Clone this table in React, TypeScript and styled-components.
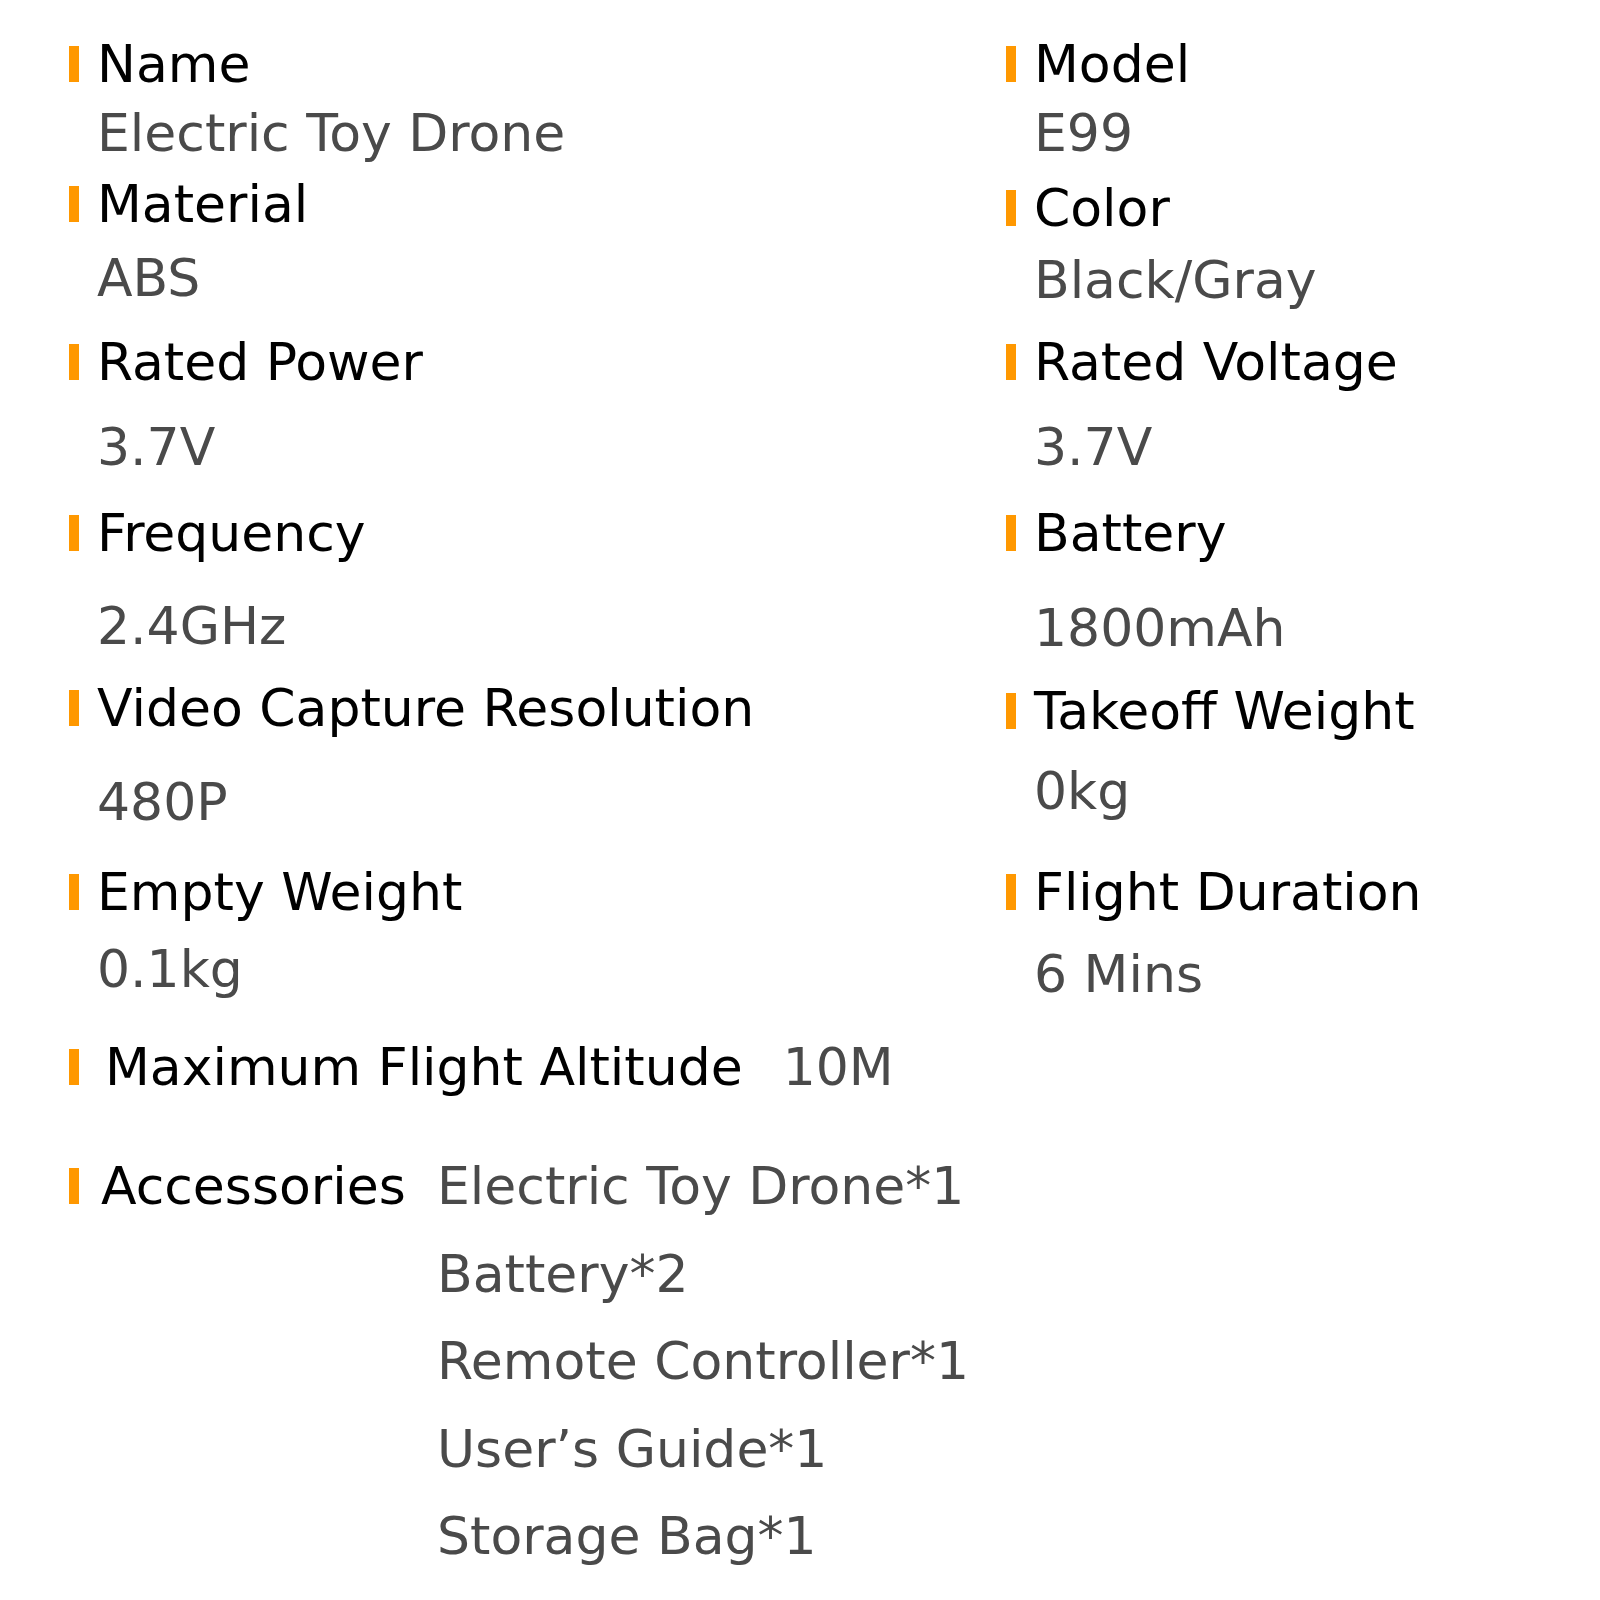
import React from "react";
import styled, { createGlobalStyle } from "styled-components";

const GlobalStyle = createGlobalStyle`
  body {
    margin: 0;
    background: #ffffff;
    font-family: "DejaVu Sans", "Liberation Sans", sans-serif;
  }
`;

const Page = styled.div`
  width: 1600px;
  height: 1600px;
  box-sizing: border-box;
  padding: 34px 0 0 69px;
  font-size: 52px;
`;

const Row = styled.div<{ $gap: number }>`
  display: grid;
  grid-template-columns: 937px 1fr;
  margin-top: ${({ $gap }) => $gap}px;
`;

const SpecCell = styled.div<{ $top?: number }>`
  display: flex;
  flex-direction: column;
  margin-top: ${({ $top }) => $top || 0}px;
`;

const LabelLine = styled.div`
  display: flex;
  align-items: flex-start;
  height: 60px;
  line-height: 60px;
  color: #000000;
  white-space: nowrap;
`;

const Marker = styled.span<{ $space?: number }>`
  flex-shrink: 0;
  width: 10px;
  height: 36px;
  margin-top: 12px;
  margin-right: ${({ $space }) => $space || 18}px;
  background: #ff9800;
`;

const Value = styled.div<{ $gap?: number }>`
  height: 60px;
  line-height: 60px;
  margin-top: ${({ $gap }) => $gap || 0}px;
  margin-left: 28px;
  color: #4a4a4a;
  white-space: nowrap;
`;

const InlineRow = styled.div<{ $gap: number }>`
  display: flex;
  align-items: flex-start;
  gap: 40px;
  margin-top: ${({ $gap }) => $gap}px;
`;

const InlineValue = styled.span`
  line-height: 60px;
  color: #4a4a4a;
`;

const AccessoryRow = styled.div<{ $gap: number }>`
  display: grid;
  grid-template-columns: 368px 1fr;
  margin-top: ${({ $gap }) => $gap}px;
`;

const AccessoryList = styled.div`
  display: flex;
  flex-direction: column;
  gap: 27.5px;
`;

const AccessoryItem = styled.div`
  height: 60px;
  line-height: 60px;
  color: #4a4a4a;
  white-space: nowrap;
`;

interface SpecData {
  label: string;
  value: string;
  valueGap: number;
  labelTop?: number;
}

interface RowData {
  gap: number;
  left: SpecData;
  right: SpecData;
}

const rows: RowData[] = [
  {
    gap: 0,
    left: { label: "Name", value: "Electric Toy Drone", valueGap: 9 },
    right: { label: "Model", value: "E99", valueGap: 9 },
  },
  {
    gap: 11,
    left: { label: "Material", value: "ABS", valueGap: 14 },
    right: { label: "Color", value: "Black/Gray", valueGap: 12, labelTop: 4 },
  },
  {
    gap: 22,
    left: { label: "Rated Power", value: "3.7V", valueGap: 25 },
    right: { label: "Rated Voltage", value: "3.7V", valueGap: 25 },
  },
  {
    gap: 26,
    left: { label: "Frequency", value: "2.4GHz", valueGap: 33 },
    right: { label: "Battery", value: "1800mAh", valueGap: 35 },
  },
  {
    gap: 20,
    left: { label: "Video Capture Resolution", value: "480P", valueGap: 34 },
    right: { label: "Takeoff Weight", value: "0kg", valueGap: 20, labelTop: 3 },
  },
  {
    gap: 30,
    left: { label: "Empty Weight", value: "0.1kg", valueGap: 17 },
    right: { label: "Flight Duration", value: "6 Mins", valueGap: 22 },
  },
];

const accessories = [
  "Electric Toy Drone*1",
  "Battery*2",
  "Remote Controller*1",
  "User\u2019s Guide*1",
  "Storage Bag*1",
];

function Spec({ spec }: { spec: SpecData }) {
  return (
    <SpecCell $top={spec.labelTop}>
      <LabelLine>
        <Marker />
        {spec.label}
      </LabelLine>
      <Value $gap={spec.valueGap}>{spec.value}</Value>
    </SpecCell>
  );
}

export default function App() {
  return (
    <>
      <GlobalStyle />
      <Page>
        {rows.map((row) => (
          <Row key={row.left.label} $gap={row.gap}>
            <Spec spec={row.left} />
            <Spec spec={row.right} />
          </Row>
        ))}
        <InlineRow $gap={33}>
          <LabelLine>
            <Marker $space={26} />
            Maximum Flight Altitude
          </LabelLine>
          <InlineValue>10M</InlineValue>
        </InlineRow>
        <AccessoryRow $gap={59}>
          <LabelLine>
            <Marker $space={22} />
            Accessories
          </LabelLine>
          <AccessoryList>
            {accessories.map((item) => (
              <AccessoryItem key={item}>{item}</AccessoryItem>
            ))}
          </AccessoryList>
        </AccessoryRow>
      </Page>
    </>
  );
}
